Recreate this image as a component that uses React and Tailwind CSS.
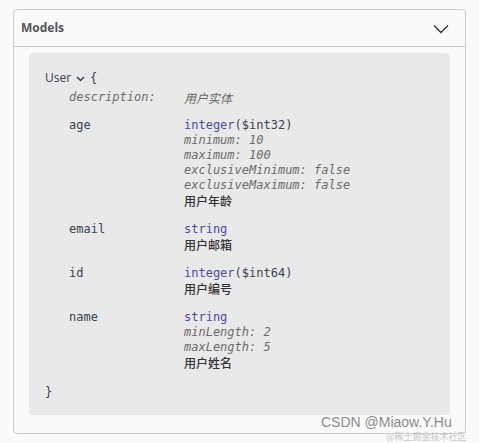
import React from "react";

const mono = { fontFamily: '"DejaVu Sans Mono", "Liberation Mono", "Noto Sans CJK SC", monospace' };
const cjk = { fontFamily: '"Noto Sans CJK SC", "Noto Sans", sans-serif' };

function Prop({ name, children, first }) {
  return (
    <div className={`grid grid-cols-[115px_1fr] ${first ? "mt-[13px]" : "mt-[14px]"}`}>
      <div className="text-[12px] leading-[15px] text-[#3b4151]" style={mono}>{name}</div>
      <div className="flex flex-col">{children}</div>
    </div>
  );
}

const Type = ({ children }) => (
  <div className="text-[12px] leading-[15px] text-[#4b4ba6]" style={mono}>{children}</div>
);
const Meta = ({ children }) => (
  <div className="text-[12px] leading-[15px] text-[#6b6b6b] italic" style={mono}>{children}</div>
);
const Desc = ({ children }) => (
  <div className="text-[12px] leading-[15px] text-[#333] font-medium" style={cjk}>{children}</div>
);

export default function App() {
  return (
    <div className="relative w-[479px] h-[443px] bg-[#fafafa] pt-[9px] px-[13px] overflow-hidden">
      <div className="h-[425px] border border-[#cccccc] rounded-[4px]">
        <div className="h-[37px] flex items-center justify-between pl-[7px] pr-[16px] border-b border-[#cccccc]">
          <span className="text-[12px] font-bold text-[#555]" style={{ fontFamily: '"Open Sans", sans-serif' }}>Models</span>
          <svg width="16" height="10" viewBox="0 0 16 10" className="mt-[1px]">
            <polyline points="1,1.5 8,8.5 15,1.5" fill="none" stroke="#333" strokeWidth="1.4" />
          </svg>
        </div>
        <div className="pt-[6px] px-[15px]">
          <div className="h-[362px] bg-[#e9e9e9] rounded-[4px] pt-[15px] pl-[16px]">
            <div className="h-[20px] flex items-center text-[12px] text-[#3b4151]" style={{ fontFamily: '"Open Sans", sans-serif' }}>
              <span>User</span>
              <svg width="9" height="6" viewBox="0 0 9 6" className="ml-[5px] mt-[2px]">
                <polyline points="1,1 4.5,4.5 8,1" fill="none" stroke="#3b4151" strokeWidth="1.5" />
              </svg>
              <span className="ml-[5px]" style={mono}>{"{"}</span>
            </div>
            <div className="pl-[24px]">
              <div className="grid grid-cols-[115px_1fr] mt-[2px]">
                <div className="text-[12px] leading-[15px] text-[#6b6b6b] italic" style={mono}>description:</div>
                <div className="text-[12px] leading-[15px] text-[#6b6b6b] italic" style={cjk}>用户实体</div>
              </div>
              <Prop name="age" first>
                <Type>integer<span className="text-[#3b4151]">($int32)</span></Type>
                <Meta>minimum: 10</Meta>
                <Meta>maximum: 100</Meta>
                <Meta>exclusiveMinimum: false</Meta>
                <Meta>exclusiveMaximum: false</Meta>
                <Desc>用户年龄</Desc>
              </Prop>
              <Prop name="email">
                <Type>string</Type>
                <Desc>用户邮箱</Desc>
              </Prop>
              <Prop name="id">
                <Type>integer<span className="text-[#3b4151]">($int64)</span></Type>
                <Desc>用户编号</Desc>
              </Prop>
              <Prop name="name">
                <Type>string</Type>
                <Meta>minLength: 2</Meta>
                <Meta>maxLength: 5</Meta>
                <Desc>用户姓名</Desc>
              </Prop>
            </div>
            <div className="mt-[15px] text-[12px] leading-[15px] text-[#3b4151]" style={mono}>{"}"}</div>
          </div>
        </div>
      </div>
      <div className="absolute left-[321px] top-[414px] text-[14px] leading-[16px] text-[#8a8a8a]" style={{ fontFamily: '"Liberation Sans", Arial, sans-serif' }}>
        CSDN @Miaow.Y.Hu
      </div>
      <div className="absolute left-[386px] top-[431px] text-[9px] leading-[11px] text-[#c8c8c8]" style={cjk}>
        @稀土掘金技术社区
      </div>
    </div>
  );
}
